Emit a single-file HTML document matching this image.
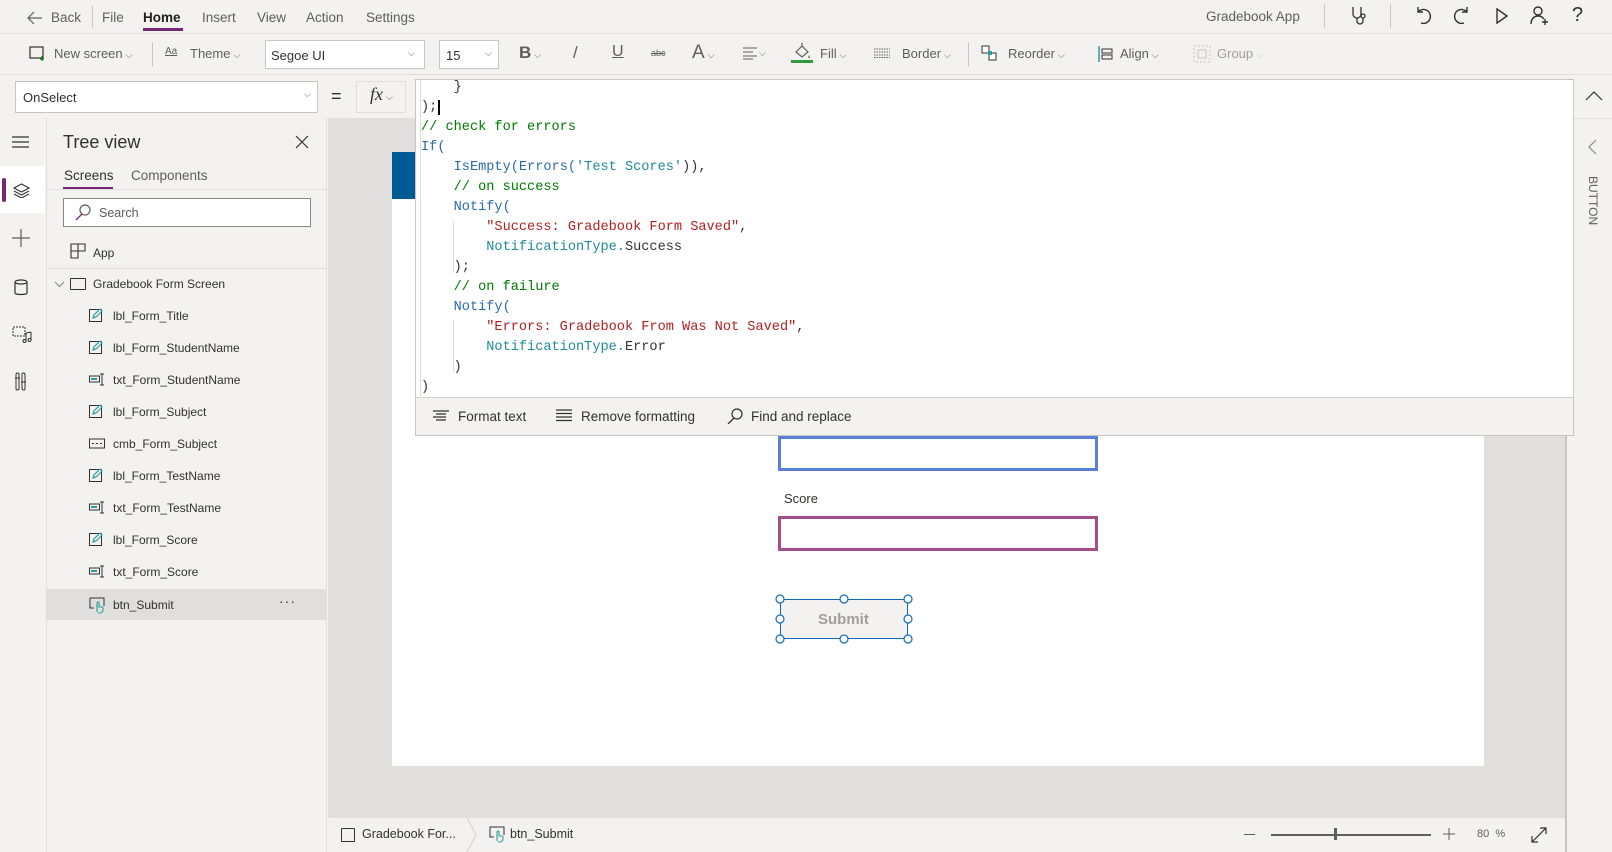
<!DOCTYPE html>
<html><head><meta charset="utf-8">
<style>
*{box-sizing:border-box;margin:0;padding:0}
body{width:1612px;height:852px;overflow:hidden;background:#f3f2f1;font-family:"Liberation Sans",sans-serif;color:#323130;font-size:13px;position:relative}
.a{position:absolute;white-space:nowrap}
.g{color:#605e5c}
.lt{color:#a19f9d}
.chev{font-size:9px;color:#605e5c;margin-left:3px}
.code{font-family:"Liberation Mono",monospace;font-size:13.6px;line-height:20px;color:#333}
.c{color:#007a00}.f{color:#2b6aa8}.s{color:#b02020}.t{color:#1d8b99}
.row{position:absolute;left:47px;width:280px;height:32px;font-size:12px;color:#323130}
.row span{position:absolute;left:66px;top:9px}
.row svg{position:absolute;left:42px;top:8px}
</style></head><body>
<div class="a" style="left:0;top:0;width:1612px;height:34px;border-bottom:1px solid #e1dfdd;background:#f3f2f1"></div>
<svg class="a" style="left:27px;top:11px" width="16" height="14"><path d="M15 7H2M7 1L1 7l6 6" fill="none" stroke="#605e5c" stroke-width="1.2"/></svg>
<div class="a g" style="left:51px;top:10px;font-size:13.5px">Back</div>
<div class="a" style="left:92px;top:6px;width:1px;height:22px;background:#c8c6c4"></div>
<div class="a g" style="left:102px;top:10px;font-size:13.5px">File</div>
<div class="a" style="left:143px;top:10px;font-size:13.5px;font-weight:bold;color:#201f1e">Home</div>
<div class="a" style="left:143px;top:28px;width:40px;height:3px;background:#742774"></div>
<div class="a g" style="left:202px;top:10px;font-size:13.5px">Insert</div>
<div class="a g" style="left:257px;top:10px;font-size:13.5px">View</div>
<div class="a g" style="left:306px;top:10px;font-size:13.5px">Action</div>
<div class="a g" style="left:366px;top:10px;font-size:13.5px">Settings</div>
<div class="a g" style="left:1206px;top:9px;font-size:13.5px">Gradebook App</div>
<div class="a" style="left:1324px;top:4px;width:1px;height:24px;background:#c8c6c4"></div>
<svg class="a" style="left:1350px;top:6px" width="18" height="20"><path d="M3 1v7a4 4 0 0 0 8 0V1M7 12v3a3 3 0 0 0 6 0v-3" fill="none" stroke="#323130" stroke-width="1.3"/><circle cx="13" cy="10" r="2" fill="none" stroke="#323130" stroke-width="1.3"/></svg>
<div class="a" style="left:1390px;top:4px;width:1px;height:24px;background:#c8c6c4"></div>
<svg class="a" style="left:1414px;top:5px" width="18" height="20"><path d="M4 2v5h5M4 7a7 7 0 1 1 3 11" fill="none" stroke="#323130" stroke-width="1.4"/></svg>
<svg class="a" style="left:1453px;top:5px" width="18" height="20"><path d="M14 2v5H9M14 7a7 7 0 1 0-3 11" fill="none" stroke="#323130" stroke-width="1.4"/></svg>
<svg class="a" style="left:1495px;top:7px" width="14" height="18"><path d="M2 2l10 7-10 7z" fill="none" stroke="#323130" stroke-width="1.4"/></svg>
<svg class="a" style="left:1530px;top:5px" width="20" height="22"><circle cx="8" cy="6" r="4" fill="none" stroke="#323130" stroke-width="1.4"/><path d="M1 19c0-5 3-8 7-8s5 2 6 3M15 14v6M12 17h6" fill="none" stroke="#323130" stroke-width="1.4"/></svg>
<div class="a" style="left:1572px;top:4px;font-size:20px;color:#323130">?</div>
<div class="a" style="left:0;top:74px;width:1612px;height:1px;background:#e1dfdd"></div>
<svg class="a" style="left:29px;top:46px" width="16" height="15"><rect x="1" y="1" width="13" height="11" fill="none" stroke="#323130" stroke-width="1.2"/><path d="M13 10v5M11 13h4" stroke="#107c10" stroke-width="1.2"/></svg>
<div class="a g" style="left:54px;top:46px">New screen<span class="chev">⌵</span></div>
<div class="a" style="left:152px;top:42px;width:1px;height:24px;background:#c8c6c4"></div>
<div class="a" style="left:165px;top:46px;font-size:10px;color:#605e5c"><u>Aa</u></div>
<div class="a g" style="left:190px;top:46px">Theme<span class="chev">⌵</span></div>
<div class="a" style="left:265px;top:40px;width:160px;height:29px;background:#fff;border:1px solid #c8c6c4"></div>
<div class="a" style="left:271px;top:48px;font-size:13px">Segoe UI</div>
<div class="a chev" style="left:405px;top:48px">⌵</div>
<div class="a" style="left:439px;top:40px;width:60px;height:29px;background:#fff;border:1px solid #c8c6c4"></div>
<div class="a" style="left:446px;top:48px;font-size:13px">15</div>
<div class="a chev" style="left:482px;top:48px">⌵</div>
<div class="a" style="left:519px;top:43px;font-size:17px;font-weight:bold;color:#605e5c">B<span class="chev" style="font-weight:normal">⌵</span></div>
<div class="a g" style="left:573px;top:43px;font-size:17px">/</div>
<div class="a g" style="left:612px;top:43px;font-size:16px;text-decoration:underline">U</div>
<div class="a g" style="left:651px;top:48px;font-size:9px;text-decoration:line-through">abc</div>
<div class="a g" style="left:692px;top:42px;font-size:19px">A<span class="chev">⌵</span></div>
<svg class="a" style="left:742px;top:46px" width="16" height="14"><path d="M1 2h14M1 6h10M1 10h14M1 13h10" stroke="#605e5c"/></svg><div class="a chev" style="left:756px;top:48px">⌵</div>
<svg class="a" style="left:791px;top:42px" width="22" height="22"><path d="M5 10l6-6 6 6-6 5z M11 4V1" fill="none" stroke="#605e5c" stroke-width="1.2"/><path d="M18 13c1 2 1 3 0 3s-1-1 0-3" fill="#605e5c"/><rect x="0" y="18" width="22" height="3" fill="#2e9b3b"/></svg>
<div class="a g" style="left:820px;top:46px">Fill<span class="chev">⌵</span></div>
<svg class="a" style="left:874px;top:48px" width="16" height="10"><path d="M0 1h16M0 4h16M0 7h16M0 9.5h16" stroke="#605e5c" stroke-dasharray="1.5 1"/></svg>
<div class="a g" style="left:902px;top:46px">Border<span class="chev">⌵</span></div>
<div class="a" style="left:968px;top:42px;width:1px;height:24px;background:#c8c6c4"></div>
<svg class="a" style="left:981px;top:45px" width="18" height="18"><rect x="1" y="1" width="7" height="7" fill="#fff" stroke="#323130"/><rect x="8" y="8" width="7" height="7" fill="#fff" stroke="#323130"/><rect x="7" y="6" width="4" height="4" fill="#2a9d9d"/></svg>
<div class="a g" style="left:1008px;top:46px">Reorder<span class="chev">⌵</span></div>
<svg class="a" style="left:1097px;top:45px" width="18" height="18"><path d="M2 1v16" stroke="#2a9d9d" stroke-width="1.5"/><rect x="5" y="4" width="10" height="4" fill="none" stroke="#323130"/><rect x="5" y="10" width="10" height="4" fill="none" stroke="#323130"/></svg>
<div class="a g" style="left:1120px;top:46px">Align<span class="chev">⌵</span></div>
<svg class="a" style="left:1193px;top:45px" width="18" height="18"><rect x="1" y="1" width="16" height="16" fill="none" stroke="#c8c6c4" stroke-dasharray="2 2"/><rect x="5" y="5" width="8" height="8" fill="none" stroke="#c8c6c4"/></svg>
<div class="a lt" style="left:1217px;top:46px">Group<span class="chev" style="color:#c8c6c4">⌵</span></div>
<div class="a" style="left:15px;top:81px;width:303px;height:32px;background:#fff;border:1px solid #c8c6c4"></div>
<div class="a" style="left:23px;top:90px;font-size:13px">OnSelect</div>
<div class="a chev" style="left:301px;top:89px">⌵</div>
<div class="a" style="left:331px;top:86px;font-size:18px;color:#323130">=</div>
<div class="a" style="left:356px;top:81px;width:50px;height:32px;background:#f3f2f1;border:1px solid #e1dfdd"></div>
<div class="a" style="left:370px;top:84px;font-family:'Liberation Serif',serif;font-style:italic;font-size:18px">fx<span class="chev" style="font-style:normal;font-family:'Liberation Sans'">⌵</span></div>
<div class="a" style="left:46px;top:118px;width:1px;height:734px;background:#e1dfdd"></div>
<svg class="a" style="left:12px;top:136px" width="18" height="13"><path d="M0 1h17M0 6h17M0 11h17" stroke="#323130" stroke-width="1.2"/></svg>
<div class="a" style="left:0;top:166px;width:45px;height:47px;background:#fff"></div>
<div class="a" style="left:2px;top:178px;width:4px;height:24px;background:#742774;border-radius:2px"></div>
<svg class="a" style="left:13px;top:183px" width="17" height="15"><path d="M8.5 1L16 5 8.5 9 1 5z M1 8l7.5 4L16 8M1 11l7.5 4 7.5-4" fill="none" stroke="#323130" stroke-width="1.1"/></svg>
<svg class="a" style="left:12px;top:229px" width="18" height="18"><path d="M9 0v18M0 9h18" stroke="#605e5c" stroke-width="1.2"/></svg>
<svg class="a" style="left:14px;top:279px" width="14" height="17"><path d="M1 3v11c0 2 12 2 12 0V3" fill="none" stroke="#323130" stroke-width="1.2"/><ellipse cx="7" cy="3" rx="6" ry="2" fill="none" stroke="#323130" stroke-width="1.2"/></svg>
<svg class="a" style="left:12px;top:325px" width="20" height="18"><rect x="1" y="2" width="12" height="9" fill="none" stroke="#323130" stroke-dasharray="2 1"/><path d="M14 8v8M19 7v8M14 8l5-1" fill="none" stroke="#323130"/><circle cx="12.5" cy="16" r="1.5" fill="none" stroke="#323130"/><circle cx="17.5" cy="15" r="1.5" fill="none" stroke="#323130"/></svg>
<svg class="a" style="left:15px;top:372px" width="12" height="19"><rect x="1" y="1" width="3" height="17" rx="1.5" fill="none" stroke="#323130"/><rect x="7" y="1" width="3" height="17" rx="1.5" fill="none" stroke="#323130"/><path d="M0 6h5M6 10h5" stroke="#323130"/></svg>
<div class="a" style="left:47px;top:118px;width:280px;height:734px;background:#f3f2f1;border-right:1px solid #e1dfdd"></div>
<div class="a" style="left:63px;top:132px;font-size:18px;color:#323130">Tree view</div>
<svg class="a" style="left:295px;top:135px" width="14" height="14"><path d="M1 1l12 12M13 1L1 13" stroke="#323130" stroke-width="1.2"/></svg>
<div class="a" style="left:64px;top:168px;font-size:13.5px;color:#323130">Screens</div>
<div class="a" style="left:63px;top:187px;width:50px;height:2px;background:#742774"></div>
<div class="a g" style="left:131px;top:168px;font-size:13.5px">Components</div>
<div class="a" style="left:47px;top:189px;width:280px;height:1px;background:#e1dfdd"></div>
<div class="a" style="left:63px;top:198px;width:248px;height:29px;background:#fff;border:1px solid #8a8886"></div>
<svg class="a" style="left:75px;top:204px" width="17" height="17"><circle cx="10" cy="6" r="5" fill="none" stroke="#605e5c" stroke-width="1.2"/><path d="M7 10L1 16" stroke="#742774" stroke-width="1.3"/></svg>
<div class="a g" style="left:99px;top:206px;font-size:12.5px">Search</div>
<svg class="a" style="left:70px;top:243px" width="16" height="16"><path d="M1 1h14v7H8v7H1z M8 1v7M1 8h7" fill="none" stroke="#323130" stroke-width="1.1"/></svg>
<div class="a" style="left:93px;top:246px;font-size:12px">App</div>
<div class="a" style="left:47px;top:268px;width:280px;height:1px;background:#e1dfdd"></div>
<svg class="a" style="left:54px;top:281px" width="11" height="7"><path d="M1 1l4.5 4.5L10 1" fill="none" stroke="#8a8886"/></svg>
<div class="a" style="left:70px;top:278px;width:16px;height:12px;border:1px solid #323130;border-radius:1px"></div>
<div class="a" style="left:93px;top:277px;font-size:12px">Gradebook Form Screen</div>

<div class="row" style="top:300px"><svg width="15" height="15"><rect x="0.5" y="1.5" width="12" height="12" fill="none" stroke="#323130"/><path d="M4 10l1-3 6-6 2 2-6 6z" fill="#fff" stroke="#2a9d9d" stroke-width="1.2"/></svg><span>lbl_Form_Title</span></div>
<div class="row" style="top:332px"><svg width="15" height="15"><rect x="0.5" y="1.5" width="12" height="12" fill="none" stroke="#323130"/><path d="M4 10l1-3 6-6 2 2-6 6z" fill="#fff" stroke="#2a9d9d" stroke-width="1.2"/></svg><span>lbl_Form_StudentName</span></div>
<div class="row" style="top:364px"><svg width="17" height="15"><rect x="0.5" y="4" width="10" height="6" fill="none" stroke="#323130"/><rect x="2" y="6" width="6" height="2" fill="#2a9d9d"/><path d="M13 2v11M11 2h4M11 13h4" stroke="#323130"/></svg><span>txt_Form_StudentName</span></div>
<div class="row" style="top:396px"><svg width="15" height="15"><rect x="0.5" y="1.5" width="12" height="12" fill="none" stroke="#323130"/><path d="M4 10l1-3 6-6 2 2-6 6z" fill="#fff" stroke="#2a9d9d" stroke-width="1.2"/></svg><span>lbl_Form_Subject</span></div>
<div class="row" style="top:428px"><svg width="17" height="15"><rect x="0.5" y="3" width="15" height="9" fill="none" stroke="#323130"/><path d="M3 7.5h2M7 7.5h2M11 7.5h2" stroke="#323130"/></svg><span>cmb_Form_Subject</span></div>
<div class="row" style="top:460px"><svg width="15" height="15"><rect x="0.5" y="1.5" width="12" height="12" fill="none" stroke="#323130"/><path d="M4 10l1-3 6-6 2 2-6 6z" fill="#fff" stroke="#2a9d9d" stroke-width="1.2"/></svg><span>lbl_Form_TestName</span></div>
<div class="row" style="top:492px"><svg width="17" height="15"><rect x="0.5" y="4" width="10" height="6" fill="none" stroke="#323130"/><rect x="2" y="6" width="6" height="2" fill="#2a9d9d"/><path d="M13 2v11M11 2h4M11 13h4" stroke="#323130"/></svg><span>txt_Form_TestName</span></div>
<div class="row" style="top:524px"><svg width="15" height="15"><rect x="0.5" y="1.5" width="12" height="12" fill="none" stroke="#323130"/><path d="M4 10l1-3 6-6 2 2-6 6z" fill="#fff" stroke="#2a9d9d" stroke-width="1.2"/></svg><span>lbl_Form_Score</span></div>
<div class="row" style="top:556px"><svg width="17" height="15"><rect x="0.5" y="4" width="10" height="6" fill="none" stroke="#323130"/><rect x="2" y="6" width="6" height="2" fill="#2a9d9d"/><path d="M13 2v11M11 2h4M11 13h4" stroke="#323130"/></svg><span>txt_Form_Score</span></div>
<div class="row" style="top:589px;height:31px;background:#e1dfdd"><svg width="17" height="17"><path d="M5 11H1V1h14v8" fill="none" stroke="#323130"/><path d="M8 15V6a1 1 0 0 1 2 0v4h3a1 1 0 0 1 1 1v2c0 2-2 3-3 3H9" fill="none" stroke="#2a9d9d" stroke-width="1.1"/></svg><span>btn_Submit</span><div class="a" style="left:232px;top:4px;font-size:14px;letter-spacing:1px">···</div></div>
<div class="a" style="left:328px;top:118px;width:1237px;height:699px;background:#e1dfdd"></div>
<div class="a" style="left:1565px;top:118px;width:2px;height:734px;background:#c8c6c4"></div>
<div class="a" style="left:392px;top:152px;width:1092px;height:614px;background:#fff"></div>
<div class="a" style="left:392px;top:152px;width:24px;height:47px;background:#005a94"></div>
<div class="a" style="left:778px;top:436px;width:320px;height:35px;border:3px solid #5b7fd9;background:#fff"></div>
<div class="a" style="left:784px;top:491px;font-size:13px">Score</div>
<div class="a" style="left:778px;top:516px;width:320px;height:35px;border:3px solid #a34f8b;background:#fff"></div>
<div class="a" style="left:780px;top:599px;width:128px;height:40px;background:#f3f2f1;border:1px solid #0f6cbd"></div>
<div class="a" style="left:818px;top:611px;font-size:15px;font-weight:bold;color:#a19f9d">Submit</div>
<svg class="a" style="left:774px;top:593px" width="140" height="52"><g fill="#fff" stroke="#0f6cbd" stroke-width="1.2"><circle cx="6" cy="6" r="4"/><circle cx="70" cy="6" r="4"/><circle cx="134" cy="6" r="4"/><circle cx="6" cy="26" r="4"/><circle cx="134" cy="26" r="4"/><circle cx="6" cy="46" r="4"/><circle cx="70" cy="46" r="4"/><circle cx="134" cy="46" r="4"/></g></svg>
<div class="a" style="left:415px;top:79px;width:1159px;height:357px;background:#fff;border:1px solid #c8c6c4"></div>
<div class="a" style="left:416px;top:397px;width:1157px;height:38px;background:#f3f2f1;border-top:1px solid #d2d0ce"></div>
<div class="a" style="left:420px;top:80px;width:1px;height:316px;background:#e1dfdd"></div>
<div class="a" style="left:453px;top:221px;width:1px;height:52px;background:#e1dfdd"></div>
<div class="a" style="left:453px;top:320px;width:1px;height:52px;background:#e1dfdd"></div>
<div class="a code" style="left:421px;top:78px">
<div>&nbsp;&nbsp;&nbsp;&nbsp;}</div>
<div>);<span style="border-left:2px solid #000;margin-left:1px"></span></div>
<div class="c">// check for errors</div>
<div class="f">If(</div>
<div>&nbsp;&nbsp;&nbsp;&nbsp;<span class="f">IsEmpty(Errors(</span><span class="t">'Test Scores'</span>)),</div>
<div class="c">&nbsp;&nbsp;&nbsp;&nbsp;// on success</div>
<div>&nbsp;&nbsp;&nbsp;&nbsp;<span class="f">Notify(</span></div>
<div>&nbsp;&nbsp;&nbsp;&nbsp;&nbsp;&nbsp;&nbsp;&nbsp;<span class="s">"Success: Gradebook Form Saved"</span>,</div>
<div>&nbsp;&nbsp;&nbsp;&nbsp;&nbsp;&nbsp;&nbsp;&nbsp;<span class="t">NotificationType.</span>Success</div>
<div>&nbsp;&nbsp;&nbsp;&nbsp;);</div>
<div class="c">&nbsp;&nbsp;&nbsp;&nbsp;// on failure</div>
<div>&nbsp;&nbsp;&nbsp;&nbsp;<span class="f">Notify(</span></div>
<div>&nbsp;&nbsp;&nbsp;&nbsp;&nbsp;&nbsp;&nbsp;&nbsp;<span class="s">"Errors: Gradebook From Was Not Saved"</span>,</div>
<div>&nbsp;&nbsp;&nbsp;&nbsp;&nbsp;&nbsp;&nbsp;&nbsp;<span class="t">NotificationType.</span>Error</div>
<div>&nbsp;&nbsp;&nbsp;&nbsp;)</div>
<div>)</div>
</div>
<svg class="a" style="left:433px;top:410px" width="16" height="12"><path d="M0 1h16M3 4h10M0 7h13M3 10h10" stroke="#323130" stroke-width="1.2"/></svg>
<div class="a" style="left:458px;top:409px;font-size:13.5px">Format text</div>
<svg class="a" style="left:556px;top:409px" width="16" height="13"><path d="M0 1h16M0 4.5h16M0 8h16M0 11.5h16" stroke="#323130" stroke-width="1.2"/></svg>
<div class="a" style="left:581px;top:409px;font-size:13.5px">Remove formatting</div>
<svg class="a" style="left:727px;top:408px" width="16" height="16"><circle cx="10" cy="6" r="5" fill="none" stroke="#323130" stroke-width="1.2"/><path d="M7 10L1 16" stroke="#323130" stroke-width="1.3"/></svg>
<div class="a" style="left:751px;top:409px;font-size:13.5px">Find and replace</div>
<div class="a" style="left:1577px;top:75px;width:35px;height:777px;background:#f3f2f1"></div>
<div class="a" style="left:1574px;top:118px;width:38px;height:1px;background:#e1dfdd"></div>
<svg class="a" style="left:1585px;top:91px" width="18" height="10"><path d="M1 9l8-8 8 8" fill="none" stroke="#323130" stroke-width="1.2"/></svg>
<svg class="a" style="left:1587px;top:139px" width="10" height="16"><path d="M9 1L2 8l7 7" fill="none" stroke="#8a8886" stroke-width="1.2"/></svg>
<div class="a g" style="left:1581px;top:176px;font-size:12px;transform-origin:0 0;transform:translate(19px,0) rotate(90deg)">BUTTON</div>
<div class="a" style="left:329px;top:817px;width:1236px;height:35px;background:#f3f2f1;border-top:1px solid #e1dfdd"></div>
<div class="a" style="left:341px;top:828px;width:14px;height:14px;border:1px solid #323130;border-radius:1px"></div>
<div class="a" style="left:362px;top:827px;font-size:12.5px">Gradebook For...</div>
<svg class="a" style="left:466px;top:818px" width="12" height="34"><path d="M1 0l9 17-9 17" fill="none" stroke="#d2d0ce"/></svg>
<svg class="a" style="left:489px;top:826px" width="17" height="17"><path d="M5 11H1V1h14v8" fill="none" stroke="#323130"/><path d="M8 15V6a1 1 0 0 1 2 0v4h3a1 1 0 0 1 1 1v2c0 2-2 3-3 3H9" fill="none" stroke="#2a9d9d" stroke-width="1.1"/></svg>
<div class="a" style="left:510px;top:827px;font-size:12.5px">btn_Submit</div>
<div class="a" style="left:1244px;top:834px;width:11px;height:1px;background:#605e5c"></div>
<div class="a" style="left:1271px;top:834px;width:160px;height:2px;background:#605e5c"></div>
<div class="a" style="left:1334px;top:828px;width:3px;height:12px;background:#605e5c"></div>
<svg class="a" style="left:1443px;top:828px" width="12" height="12"><path d="M6 0v12M0 6h12" stroke="#605e5c"/></svg>
<div class="a g" style="left:1477px;top:828px;font-size:11px">80&nbsp;&nbsp;%</div>
<svg class="a" style="left:1531px;top:827px" width="16" height="16"><path d="M1 15L15 1M9 1h6v6M1 9v6h6" fill="none" stroke="#323130" stroke-width="1.2"/></svg>
</body></html>
